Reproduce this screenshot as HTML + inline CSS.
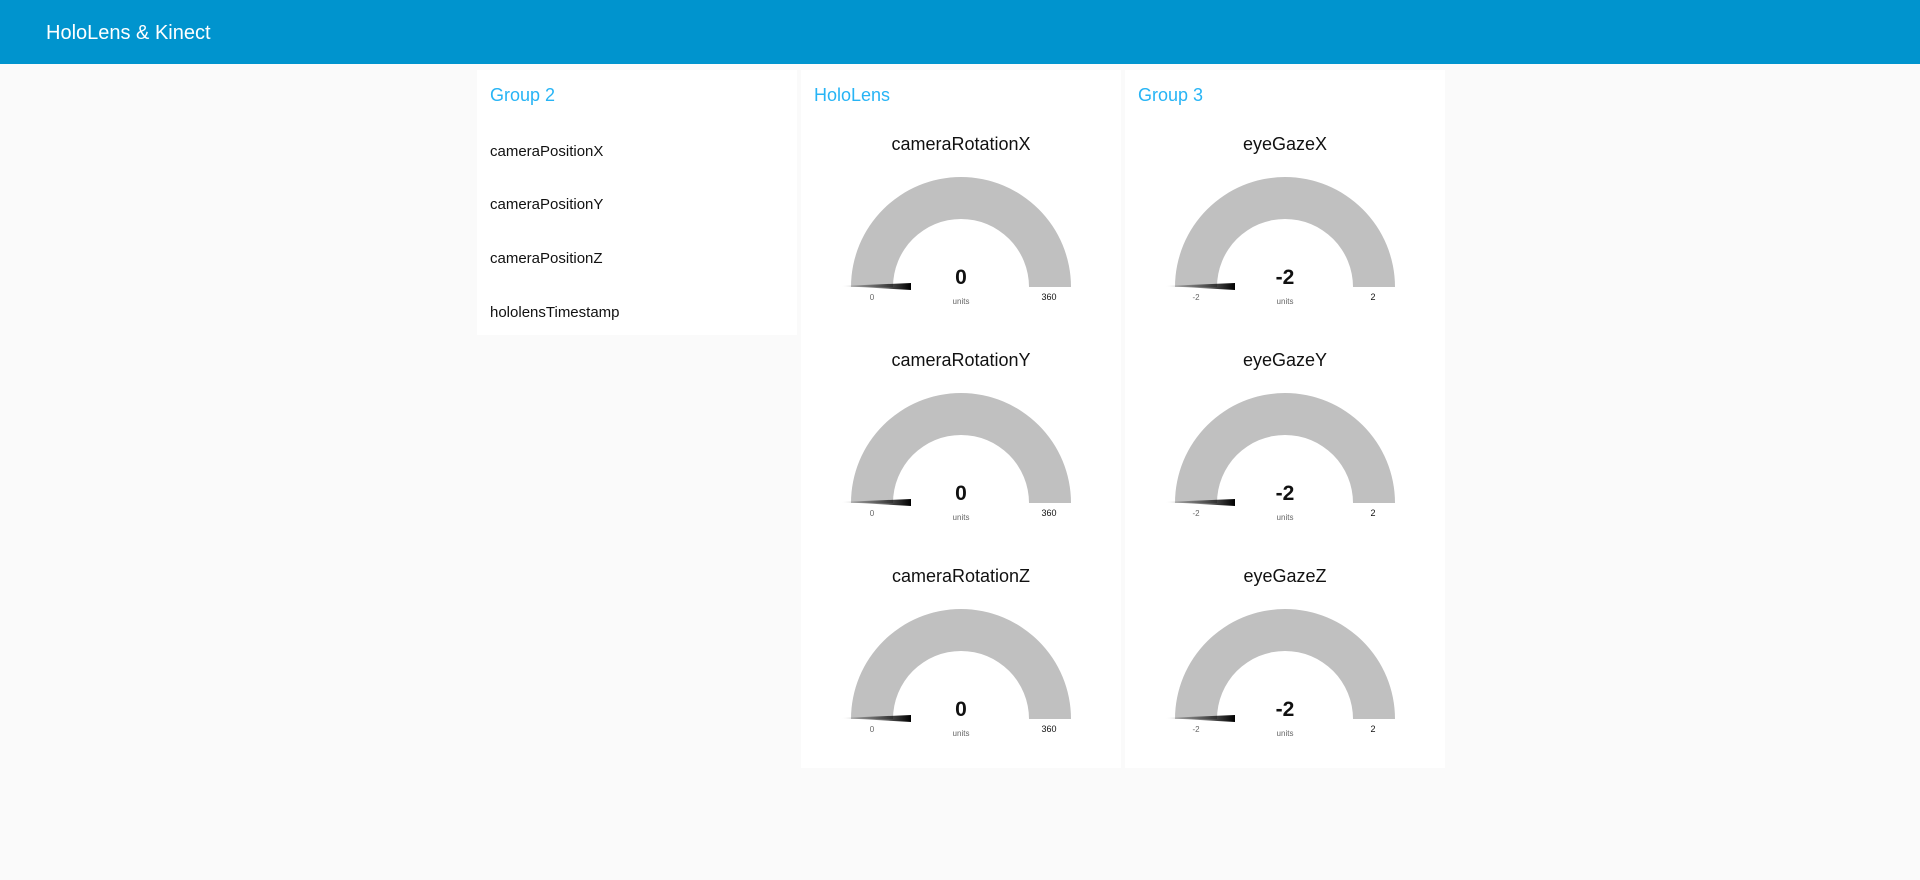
<!DOCTYPE html>
<html><head><meta charset="utf-8"><style>
*{margin:0;padding:0;box-sizing:border-box}
body{width:1920px;height:880px;background:#fafafa;font-family:"Liberation Sans",sans-serif;position:relative;overflow:hidden}
.hdr{position:absolute;left:0;top:0;width:1920px;height:64px;background:#0094ce}
.hdr span{position:absolute;left:46px;top:21px;font-size:20px;color:#fff;line-height:24px}
.card{position:absolute;background:#fff}
.gt{position:absolute;left:13px;top:14px;font-size:18px;color:#27b4f5;line-height:22px}
.row{position:absolute;left:13px;font-size:15px;color:#111;line-height:18px}
svg{position:absolute;left:0;top:0}
</style></head><body>
<div class="hdr"><span>HoloLens &amp; Kinect</span></div>

<div class="card" style="left:477px;top:70px;width:320px;height:265px">
<div class="gt">Group 2</div>
<div class="row" style="top:73px">cameraPositionX</div>
<div class="row" style="top:126px">cameraPositionY</div>
<div class="row" style="top:180px">cameraPositionZ</div>
<div class="row" style="top:234px">hololensTimestamp</div>
</div>

<div class="card" style="left:801px;top:70px;width:320px;height:698px">
<div class="gt">HoloLens</div>
<svg width="320" height="698" font-family="Liberation Sans, sans-serif">
<defs><linearGradient id="ng" x1="0" x2="1"><stop offset="0" stop-color="#000" stop-opacity="0"/><stop offset="1" stop-color="#000"/></linearGradient></defs>
<g>
<text x="160" y="80" text-anchor="middle" font-size="18" fill="#111">cameraRotationX</text>
<path d="M50 217 A110 110 0 0 1 270 217 L228 217 A68 68 0 0 0 92 217 Z" fill="#c0c0c0"/>
<polygon points="40,216 110,213 110,220" fill="url(#ng)"/>
<text x="160" y="214" text-anchor="middle" font-size="21" font-weight="bold" fill="#111">0</text>
<text x="160" y="234" text-anchor="middle" font-size="8" fill="#666">units</text>
<text x="71" y="230" text-anchor="middle" font-size="8" fill="#666">0</text>
<text x="248" y="230" text-anchor="middle" font-size="9" fill="#111">360</text>
</g>
<g transform="translate(0,216)">
<text x="160" y="80" text-anchor="middle" font-size="18" fill="#111">cameraRotationY</text>
<path d="M50 217 A110 110 0 0 1 270 217 L228 217 A68 68 0 0 0 92 217 Z" fill="#c0c0c0"/>
<polygon points="40,216 110,213 110,220" fill="url(#ng)"/>
<text x="160" y="214" text-anchor="middle" font-size="21" font-weight="bold" fill="#111">0</text>
<text x="160" y="234" text-anchor="middle" font-size="8" fill="#666">units</text>
<text x="71" y="230" text-anchor="middle" font-size="8" fill="#666">0</text>
<text x="248" y="230" text-anchor="middle" font-size="9" fill="#111">360</text>
</g>
<g transform="translate(0,432)">
<text x="160" y="80" text-anchor="middle" font-size="18" fill="#111">cameraRotationZ</text>
<path d="M50 217 A110 110 0 0 1 270 217 L228 217 A68 68 0 0 0 92 217 Z" fill="#c0c0c0"/>
<polygon points="40,216 110,213 110,220" fill="url(#ng)"/>
<text x="160" y="214" text-anchor="middle" font-size="21" font-weight="bold" fill="#111">0</text>
<text x="160" y="234" text-anchor="middle" font-size="8" fill="#666">units</text>
<text x="71" y="230" text-anchor="middle" font-size="8" fill="#666">0</text>
<text x="248" y="230" text-anchor="middle" font-size="9" fill="#111">360</text>
</g>
</svg>
</div>

<div class="card" style="left:1125px;top:70px;width:320px;height:698px">
<div class="gt">Group 3</div>
<svg width="320" height="698" font-family="Liberation Sans, sans-serif">
<defs><linearGradient id="ng2" x1="0" x2="1"><stop offset="0" stop-color="#000" stop-opacity="0"/><stop offset="1" stop-color="#000"/></linearGradient></defs>
<g>
<text x="160" y="80" text-anchor="middle" font-size="18" fill="#111">eyeGazeX</text>
<path d="M50 217 A110 110 0 0 1 270 217 L228 217 A68 68 0 0 0 92 217 Z" fill="#c0c0c0"/>
<polygon points="40,216 110,213 110,220" fill="url(#ng2)"/>
<text x="160" y="214" text-anchor="middle" font-size="21" font-weight="bold" fill="#111">-2</text>
<text x="160" y="234" text-anchor="middle" font-size="8" fill="#666">units</text>
<text x="71" y="230" text-anchor="middle" font-size="8" fill="#666">-2</text>
<text x="248" y="230" text-anchor="middle" font-size="9" fill="#111">2</text>
</g>
<g transform="translate(0,216)">
<text x="160" y="80" text-anchor="middle" font-size="18" fill="#111">eyeGazeY</text>
<path d="M50 217 A110 110 0 0 1 270 217 L228 217 A68 68 0 0 0 92 217 Z" fill="#c0c0c0"/>
<polygon points="40,216 110,213 110,220" fill="url(#ng2)"/>
<text x="160" y="214" text-anchor="middle" font-size="21" font-weight="bold" fill="#111">-2</text>
<text x="160" y="234" text-anchor="middle" font-size="8" fill="#666">units</text>
<text x="71" y="230" text-anchor="middle" font-size="8" fill="#666">-2</text>
<text x="248" y="230" text-anchor="middle" font-size="9" fill="#111">2</text>
</g>
<g transform="translate(0,432)">
<text x="160" y="80" text-anchor="middle" font-size="18" fill="#111">eyeGazeZ</text>
<path d="M50 217 A110 110 0 0 1 270 217 L228 217 A68 68 0 0 0 92 217 Z" fill="#c0c0c0"/>
<polygon points="40,216 110,213 110,220" fill="url(#ng2)"/>
<text x="160" y="214" text-anchor="middle" font-size="21" font-weight="bold" fill="#111">-2</text>
<text x="160" y="234" text-anchor="middle" font-size="8" fill="#666">units</text>
<text x="71" y="230" text-anchor="middle" font-size="8" fill="#666">-2</text>
<text x="248" y="230" text-anchor="middle" font-size="9" fill="#111">2</text>
</g>
</svg>
</div>
</body></html>
